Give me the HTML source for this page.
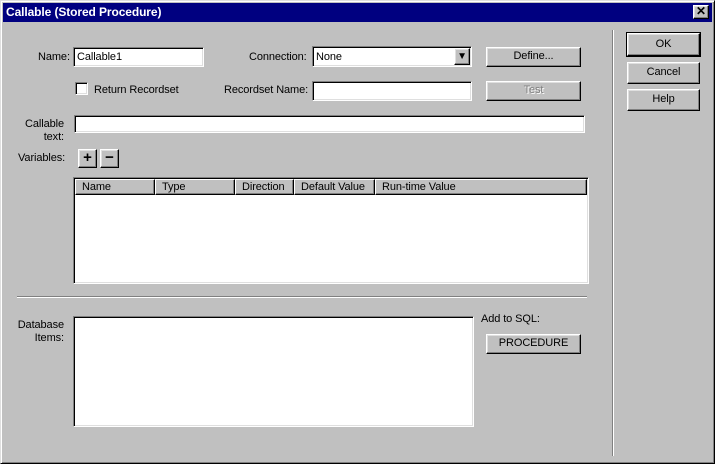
<!DOCTYPE html>
<html><head><style>
*{margin:0;padding:0;box-sizing:border-box}
body{width:715px;height:464px;background:#c0c0c0;font-family:"Liberation Sans",sans-serif;font-size:11px;letter-spacing:-0.1px;color:#000;position:relative;overflow:hidden}
.a{position:absolute}
.win{left:0;top:0;width:715px;height:464px;border-top:1px solid #dfdfdf;border-left:1px solid #dfdfdf;border-right:1px solid #000;border-bottom:1px solid #000;box-shadow:inset 1px 1px 0 #fff,inset -1px -1px 0 #808080}
.title{left:3px;top:3px;width:709px;height:19px;background:#000080;color:#fff;font-weight:bold;font-size:12px;line-height:19px;padding-left:3px}
.in{background:#fff;border-top:1px solid #808080;border-left:1px solid #808080;border-right:1px solid #fff;border-bottom:1px solid #fff;box-shadow:inset 1px 1px 0 #000,inset -1px -1px 0 #dfdfdf;padding:2px 3px;line-height:14px}
.btn{background:#c0c0c0;border-top:1px solid #fff;border-left:1px solid #fff;border-right:1px solid #000;border-bottom:1px solid #000;box-shadow:inset -1px -1px 0 #808080,inset 1px 1px 0 #dfdfdf;text-align:center}
.lbl{line-height:13px}
.r{text-align:right}
.hd{top:0;height:16px;line-height:14px;padding-left:6px;border-top:1px solid #fff;border-left:1px solid #fff;border-right:1px solid #000;border-bottom:1px solid #000;box-shadow:inset -1px -1px 0 #808080;background:#c0c0c0}
</style></head><body>
<div class="a win"></div>
<div class="a title">Callable (Stored Procedure)</div>
<div class="a btn" style="left:693px;top:5px;width:16px;height:14px;line-height:11px;font-weight:bold;font-size:12px">✕</div>

<div class="a lbl" style="left:38px;top:51px">Name:</div>
<div class="a in" style="left:73px;top:47px;width:131px;height:20px">Callable1</div>
<div class="a lbl" style="left:249px;top:51px">Connection:</div>
<div class="a in" style="left:312px;top:46px;width:160px;height:21px;padding-top:3px">None</div>
<div class="a btn" style="left:454px;top:48px;width:16px;height:17px;font-size:10px;line-height:15px">▼</div>
<div class="a btn" style="left:486px;top:47px;width:95px;height:20px;line-height:17px">Define...</div>

<div class="a in" style="left:75px;top:82px;width:13px;height:13px;padding:0"></div>
<div class="a lbl" style="left:94px;top:84px">Return Recordset</div>
<div class="a lbl" style="left:224px;top:84px">Recordset Name:</div>
<div class="a in" style="left:312px;top:81px;width:160px;height:20px"></div>
<div class="a btn" style="left:486px;top:81px;width:95px;height:20px;line-height:17px;color:#808080;text-shadow:1px 1px 0 #fff">Test</div>

<div class="a lbl r" style="left:10px;top:118px;width:54px">Callable<br>text:</div>
<div class="a in" style="left:74px;top:115px;width:511px;height:18px"></div>

<div class="a lbl" style="left:18px;top:152px">Variables:</div>
<div class="a btn" style="left:78px;top:149px;width:19px;height:19px;font-weight:bold;font-size:15px;line-height:16px">+</div>
<div class="a btn" style="left:100px;top:149px;width:19px;height:19px;font-weight:bold;font-size:15px;line-height:15px">−</div>

<div class="a" style="left:73px;top:177px;width:516px;height:107px;background:#fff;border-top:1px solid #808080;border-left:1px solid #808080;border-right:1px solid #fff;border-bottom:1px solid #fff;box-shadow:inset 1px 1px 0 #000,inset -1px -1px 0 #dfdfdf">
<div class="a hd" style="left:1px;top:1px;width:80px">Name</div>
<div class="a hd" style="left:81px;top:1px;width:80px">Type</div>
<div class="a hd" style="left:161px;top:1px;width:59px">Direction</div>
<div class="a hd" style="left:220px;top:1px;width:81px">Default Value</div>
<div class="a hd" style="left:301px;top:1px;width:212px">Run-time Value</div>
</div>

<div class="a" style="left:17px;top:296px;width:570px;height:2px;border-top:1px solid #808080;border-bottom:1px solid #fff"></div>

<div class="a lbl r" style="left:10px;top:319px;width:54px">Database<br>Items:</div>
<div class="a" style="left:73px;top:316px;width:401px;height:111px;background:#fff;border-top:1px solid #808080;border-left:1px solid #808080;border-right:1px solid #fff;border-bottom:1px solid #fff;box-shadow:inset 1px 1px 0 #000,inset -1px -1px 0 #dfdfdf"></div>
<div class="a lbl" style="left:481px;top:313px">Add to SQL:</div>
<div class="a btn" style="left:486px;top:334px;width:95px;height:20px;line-height:17px">PROCEDURE</div>

<div class="a" style="left:612px;top:30px;width:2px;height:426px;border-left:1px solid #808080;border-right:1px solid #fff"></div>

<div class="a" style="left:626px;top:32px;width:75px;height:25px;border:1px solid #000"></div>
<div class="a btn" style="left:627px;top:33px;width:73px;height:23px;line-height:20px">OK</div>
<div class="a btn" style="left:627px;top:62px;width:73px;height:22px;line-height:19px">Cancel</div>
<div class="a btn" style="left:627px;top:89px;width:73px;height:22px;line-height:19px">Help</div>
</body></html>
